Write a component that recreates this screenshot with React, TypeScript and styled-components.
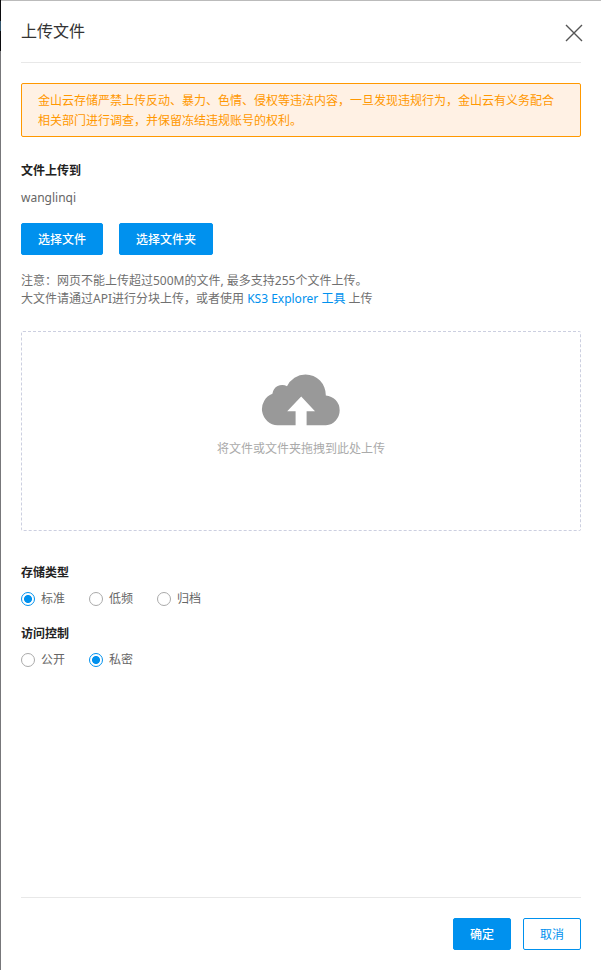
import React, { useState } from "react";
import styled, { createGlobalStyle, css } from "styled-components";

const GlobalStyle = createGlobalStyle`
  *, *::before, *::after { box-sizing: border-box; }
  body {
    margin: 0;
    color: #666;
    background: #fff;
    font: 12px/18px "Noto Sans", "Noto Sans CJK SC", sans-serif;
  }
  button, input { font: inherit; }
`;

const Backdrop = styled.div`
  display: flex;
  min-height: 100vh;
  padding: 1px 0 0 1px;
  background: linear-gradient(#0b0b0e 21px, #35576e 21px 31px, #0b0b0e 31px 51px, #77777a 51px);
`;

const Drawer = styled.section`
  display: flex;
  flex: 1;
  flex-direction: column;
  padding: 0 20px 20px;
  background: #fff;
  box-shadow: 0 -1px 0 #bbb;
`;

const Header = styled.header`
  display: flex;
  align-items: center;
  justify-content: space-between;
  height: 62px;
  border-bottom: 1px solid #e8e8e8;
`;

const Title = styled.h1`
  margin: 0;
  padding-bottom: 2px;
  color: #333;
  font-size: 16px;
  font-weight: 400;
  line-height: 24px;
`;

const CloseButton = styled.button`
  display: flex;
  margin-right: -2px;
  padding: 2px 0 0;
  border: 0;
  background: none;
  cursor: pointer;
`;

const Content = styled.main`
  flex: 1;
  padding-top: 20px;
`;

const Warning = styled.p`
  margin: 0 0 24px;
  padding: 7px 16px 5px;
  border: 1px solid #ff9800;
  border-radius: 2px;
  background: #fff1e4;
  color: #ff9800;
  line-height: 20px;
`;

const Heading = styled.h2`
  margin: 0;
  color: #222;
  font-size: 12px;
  font-weight: 700;
  line-height: 20px;
`;

const BucketName = styled.p`
  margin: 7px 0 15px;
  line-height: 20px;
`;

const ButtonRow = styled.div<{ $gap: number; $end?: boolean }>`
  display: flex;
  justify-content: ${(p) => (p.$end ? "flex-end" : "flex-start")};
  gap: ${(p) => p.$gap}px;
`;

const Button = styled.button<{ $outline?: boolean }>`
  height: 32px;
  padding: 2px 16px 0;
  border: 1px solid #0091ee;
  border-radius: 2px;
  background: #0091ee;
  color: #fff;
  font-weight: 500;
  cursor: pointer;
  ${(p) =>
    p.$outline &&
    css`
      background: #fff;
      color: #0091ee;
      font-weight: 400;
    `}
`;

const Note = styled.p`
  margin: 17px 0 23px;
  color: #707070;
`;

const Link = styled.a`
  color: #0091ee;
  text-decoration: none;
`;

const DropZone = styled.div`
  display: flex;
  flex-direction: column;
  align-items: center;
  gap: 14px;
  height: 200px;
  margin-bottom: 32px;
  padding-top: 42px;
  border: 1px dashed #cccfe0;
  border-radius: 2px;
  color: #aaa;
`;

const RadioGroup = styled.fieldset`
  min-width: 0;
  margin: 0 0 15px;
  padding: 0;
  border: 0;
`;

const Legend = styled.legend`
  padding: 0;
`;

const Options = styled.div`
  display: flex;
  gap: 24px;
  padding-top: 6px;
`;

const Option = styled.label`
  display: flex;
  align-items: center;
  gap: 6px;
  line-height: 20px;
  cursor: pointer;
`;

const Radio = styled.input`
  appearance: none;
  width: 14px;
  height: 14px;
  margin: 0;
  border: 1px solid #aaa;
  border-radius: 50%;
  background: #fff;

  &:checked {
    border-color: #0091ee;
    background: radial-gradient(circle, #0091ee 3.6px, #fff 4.4px);
  }
`;

const Footer = styled.footer`
  padding-top: 20px;
  border-top: 1px solid #e8e8e8;
`;

function CloseIcon() {
  return (
    <svg width="18" height="18" viewBox="0 0 18 18" fill="none" stroke="#555" strokeWidth="1.4" aria-hidden="true">
      <path d="M1 1L17 17M17 1L1 17" />
    </svg>
  );
}

function CloudIcon() {
  return (
    <svg width="80" height="52" viewBox="0 0 80 52" aria-hidden="true">
      <path
        fill="#999"
        d="M16.5 51.3A16.3 16.3 0 0 1 11.4 19.8A9.8 9.8 0 0 1 26 12.3A20.4 20.4 0 0 1 44.5 0.4A20.3 20.6 0 0 1 64.8 21.4A15 15 0 0 1 65 51.3H45.6V37.2H54L40.2 22.6L26.2 37.2H34.6V51.3Z"
      />
    </svg>
  );
}

interface ChoiceProps {
  name: string;
  title: string;
  options: string[];
  initial: string;
}

function Choice({ name, title, options, initial }: ChoiceProps) {
  const [value, setValue] = useState(initial);
  return (
    <RadioGroup>
      <Legend>
        <Heading>{title}</Heading>
      </Legend>
      <Options>
        {options.map((option) => (
          <Option key={option}>
            <Radio type="radio" name={name} checked={value === option} onChange={() => setValue(option)} />
            {option}
          </Option>
        ))}
      </Options>
    </RadioGroup>
  );
}

export default function App() {
  return (
    <Backdrop lang="zh-CN">
      <GlobalStyle />
      <Drawer role="dialog" aria-labelledby="upload-title">
        <Header>
          <Title id="upload-title">上传文件</Title>
          <CloseButton type="button" aria-label="关闭">
            <CloseIcon />
          </CloseButton>
        </Header>
        <Content>
          <Warning>
            金山云存储严禁上传反动、暴力、色情、侵权等违法内容，一旦发现违规行为，金山云有义务配合相关部门进行调查，并保留冻结违规账号的权利。
          </Warning>
          <Heading>文件上传到</Heading>
          <BucketName>wanglinqi</BucketName>
          <ButtonRow $gap={16}>
            <Button type="button">选择文件</Button>
            <Button type="button">选择文件夹</Button>
          </ButtonRow>
          <Note>
            注意：网页不能上传超过500M的文件, 最多支持255个文件上传。
            <br />
            大文件请通过API进行分块上传，或者使用 <Link href="#explorer">KS3 Explorer 工具</Link> 上传
          </Note>
          <DropZone>
            <CloudIcon />
            将文件或文件夹拖拽到此处上传
          </DropZone>
          <Choice name="storage" title="存储类型" options={["标准", "低频", "归档"]} initial="标准" />
          <Choice name="access" title="访问控制" options={["公开", "私密"]} initial="私密" />
        </Content>
        <Footer>
          <ButtonRow $gap={12} $end>
            <Button type="button">确定</Button>
            <Button type="button" $outline>
              取消
            </Button>
          </ButtonRow>
        </Footer>
      </Drawer>
    </Backdrop>
  );
}
